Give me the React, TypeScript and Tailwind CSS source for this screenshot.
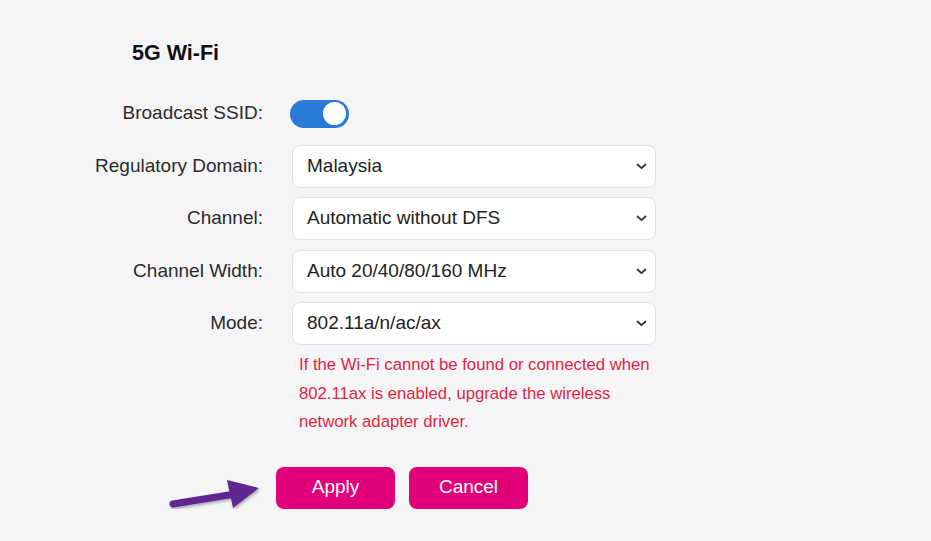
import React from "react";

const Chevron = () => (
  <svg width="11" height="7" viewBox="0 0 11 7" className="shrink-0">
    <polyline points="1.5,1.5 5.5,5.2 9.5,1.5" fill="none" stroke="#333" strokeWidth="1.8" strokeLinecap="round" strokeLinejoin="round" />
  </svg>
);

const SelectBox = ({ value }: { value: string }) => (
  <div className="flex h-[43px] w-[364px] items-center justify-between rounded-[8px] border border-[#e2e2e6] bg-white pl-[14px] pr-[8px] text-[19px] text-[#222]">
    <span>{value}</span>
    <Chevron />
  </div>
);

const Row = ({ label, children }: { label: string; children: React.ReactNode }) => (
  <div className="flex h-[43px] items-center">
    <div className="w-[263px] text-right text-[19px] text-[#2b2b2b]">{label}</div>
    <div className="ml-[29px]">{children}</div>
  </div>
);

const App = () => {
  return (
    <div className="h-[541px] w-[931px] overflow-hidden bg-[#f5f5f8] font-['Liberation_Sans',Arial,sans-serif]">
      <div className="pl-[132px] pt-[41px] text-[21.5px] font-bold leading-[24px] text-[#111]">5G Wi-Fi</div>

      <div className="mt-[27px] flex flex-col gap-[9.5px]">
        <Row label="Broadcast SSID:">
          <div className="-ml-[2px] flex h-[28px] w-[59px] items-center justify-end rounded-full bg-[#2a7ad8] pr-[3px]">
            <span className="h-[23px] w-[23px] rounded-full bg-white" />
          </div>
        </Row>
        <Row label="Regulatory Domain:">
          <SelectBox value="Malaysia" />
        </Row>
        <Row label="Channel:">
          <SelectBox value="Automatic without DFS" />
        </Row>
        <Row label="Channel Width:">
          <SelectBox value="Auto 20/40/80/160 MHz" />
        </Row>
        <Row label="Mode:">
          <SelectBox value="802.11a/n/ac/ax" />
        </Row>
      </div>

      <p className="ml-[299px] mt-[6px] w-[358px] text-[16.7px] leading-[28.5px] text-[#e1263f]">
        If the Wi-Fi cannot be found or connected when 802.11ax is enabled, upgrade the wireless network adapter driver.
      </p>

      <div className="mt-[30px] flex items-center pl-[165px]">
        <svg width="100" height="42" viewBox="0 0 100 42" className="mr-[11px]">
          <defs>
            <filter id="sh" x="-20%" y="-40%" width="140%" height="180%">
              <feDropShadow dx="1" dy="2" stdDeviation="1.5" floodColor="#000" floodOpacity="0.3" />
            </filter>
          </defs>
          <g filter="url(#sh)">
            <line x1="8" y1="37" x2="70" y2="27" stroke="#5f2590" strokeWidth="7" strokeLinecap="round" />
            <polygon points="62,13 94,21 68,41" fill="#5f2590" />
          </g>
        </svg>
        <div className="flex gap-[14px]">
          <button className="h-[42px] w-[119px] rounded-[8px] bg-[#e2007a] text-[19px] text-white">Apply</button>
          <button className="h-[42px] w-[119px] rounded-[8px] bg-[#e2007a] text-[19px] text-white">Cancel</button>
        </div>
      </div>
    </div>
  );
};

export default App;
